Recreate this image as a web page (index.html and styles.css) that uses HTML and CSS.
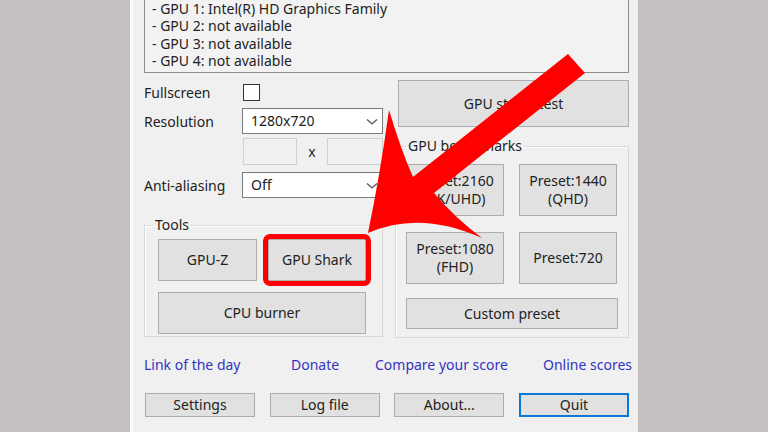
FILE: index.html
```html
<!DOCTYPE html>
<html lang="en">
<head>
    <meta charset="UTF-8">
    <title>FurMark</title>
    <link rel="stylesheet" href="styles.css">
</head>
<body>

    <div class="side"></div>

    <div class="window">
        <!-- Lista de GPUs -->
        <div class="gpu-list">
            <div>- GPU 1: Intel(R) HD Graphics Family</div>
            <div>- GPU 2: not available</div>
            <div>- GPU 3: not available</div>
            <div>- GPU 4: not available</div>
        </div>

        <div class="main">
            <div class="col-left">
                <div class="row row-full">
                    <span class="lbl">Fullscreen</span>
                    <span class="check"></span>
                </div>
                <div class="row row-res">
                    <span class="lbl">Resolution</span>
                    <div class="select">1280x720
                        <svg class="chev" width="12" height="8" viewBox="0 0 12 8"><polyline points="1,1.5 6,6 11,1.5" fill="none" stroke="#555" stroke-width="1.3"/></svg>
                    </div>
                </div>
                <div class="row row-size">
                    <span class="size-box"></span>
                    <span class="times">x</span>
                    <span class="size-box wide"></span>
                </div>
                <div class="row row-aa">
                    <span class="lbl">Anti-aliasing</span>
                    <div class="select">Off
                        <svg class="chev" width="12" height="8" viewBox="0 0 12 8"><polyline points="1,1.5 6,6 11,1.5" fill="none" stroke="#555" stroke-width="1.3"/></svg>
                    </div>
                </div>

                <fieldset class="group tools">
                    <legend>Tools</legend>
                    <div class="tools-grid">
                        <button class="btn">GPU-Z</button>
                        <button class="btn shark">GPU Shark<span class="mark"></span></button>
                        <button class="btn span2">CPU burner</button>
                    </div>
                </fieldset>
            </div>

            <div class="col-right">
                <button class="btn stress">GPU stress test</button>
                <fieldset class="group bench">
                    <legend>GPU benchmarks</legend>
                    <div class="preset-grid">
                        <button class="btn preset">Preset:2160<br>(4K/UHD)</button>
                        <button class="btn preset">Preset:1440<br>(QHD)</button>
                        <button class="btn preset">Preset:1080<br>(FHD)</button>
                        <button class="btn preset">Preset:720</button>
                    </div>
                    <button class="btn custom">Custom preset</button>
                </fieldset>
            </div>
        </div>

        <div class="links">
            <a>Link of the day</a>
            <a>Donate</a>
            <a>Compare your score</a>
            <a>Online scores</a>
        </div>

        <div class="bottom">
            <button class="btn small">Settings</button>
            <button class="btn small">Log file</button>
            <button class="btn small">About...</button>
            <button class="btn small quit">Quit</button>
        </div>
    </div>

    <div class="side"></div>

    <!-- Flecha roja encima de todo -->
    <svg class="arrow" width="768" height="432" viewBox="0 0 768 432">
        <path d="M568 54 L585 73 L434 193 Q455 218 482 238 Q420 210 368 233 Q380 175 389 110 Q401 150 413 177 Z" fill="#ff0000"/>
    </svg>

</body>
</html>
```

FILE: styles.css
```css
/* Estilos generales */
body {
    margin: 0;
    width: 768px;
    height: 432px;
    overflow: hidden;
    display: flex;
    position: relative;
    font-family: 'Noto Sans', sans-serif;
    font-size: 14px;
    color: #222;
    background-color: #c4c0c0;
}

.side {
    width: 130px;
    flex: none;
    background-color: #c4c0c0;
}

.window {
    width: 508px;
    flex: none;
    box-sizing: border-box;
    padding: 0 9px 0 11px;
    background-color: #f0f0f0;
    border-left: 3px solid #fafafa;
}

.gpu-list {
    height: 73px;
    box-sizing: border-box;
    border: 1px solid #8e8e8e;
    border-top: none;
    padding-left: 7px;
    line-height: 17.3px;
    background-color: #f2f2f2;
}

.main {
    display: flex;
    gap: 12px;
}

.col-left {
    width: 239px;
}

.col-right {
    width: 234px;
}

.row {
    display: flex;
    align-items: center;
}

.lbl {
    width: 98px;
}

.row-full {
    margin-top: 11px;
    height: 17px;
}

.check {
    width: 15px;
    height: 15px;
    margin-left: 1px;
    border: 1px solid #333;
    background-color: #fff;
}

.row-res {
    margin-top: 7px;
}

.select {
    position: relative;
    width: 141px;
    height: 26px;
    box-sizing: border-box;
    border: 1px solid #7a7a7a;
    background-color: #fff;
    padding-left: 8px;
    line-height: 24px;
}

.chev {
    position: absolute;
    right: 4px;
    top: 9px;
}

.row-size {
    margin-top: 4px;
    padding-left: 99px;
}

.size-box {
    width: 54px;
    height: 27px;
    box-sizing: border-box;
    border: 1px solid #d0d0d0;
    background-color: #f0f0f0;
}

.size-box.wide {
    width: 56px;
}

.times {
    width: 30px;
    text-align: center;
}

.row-aa {
    margin-top: 7px;
}

.group {
    margin: 0;
    border: 1px solid #d8d8d8;
    box-shadow: inset 1px 1px 0 #fff;
}

.group legend {
    padding: 0 2px;
    line-height: 18px;
}

.tools {
    margin-top: 18px;
    padding: 5px 0 2px 13px;
    height: 121px;
    box-sizing: border-box;
}

.tools legend {
    margin-left: -5px;
}

.tools-grid {
    display: grid;
    grid-template-columns: 99px 98px;
    grid-auto-rows: 42px;
    column-gap: 11px;
    row-gap: 11px;
}

.span2 {
    grid-column: span 2;
}

.btn {
    font-family: inherit;
    font-size: 14px;
    color: #222;
    background-color: #e1e1e1;
    border: 1px solid #adadad;
    padding: 0;
    margin: 0;
    line-height: 18px;
}

.shark {
    position: relative;
}

.mark {
    position: absolute;
    left: -6px;
    right: -6px;
    top: -6px;
    bottom: -6px;
    border: 5px solid #ff0000;
    border-radius: 7px;
}

.stress {
    display: block;
    margin-top: 7px;
    margin-left: 3px;
    width: 231px;
    height: 47px;
}

.bench {
    margin-top: 10px;
    padding: 9px 0 0 10px;
    height: 201px;
    box-sizing: border-box;
}

.preset-grid {
    display: grid;
    grid-template-columns: 98px 98px;
    grid-auto-rows: 52px;
    column-gap: 15px;
    row-gap: 16px;
}

.custom {
    display: block;
    margin-top: 14px;
    width: 212px;
    height: 31px;
}

.links {
    display: grid;
    grid-template-columns: 147px 84px 168px auto;
    margin-top: 17px;
    line-height: 20px;
    white-space: nowrap;
    color: #3434c0;
}

.bottom {
    display: flex;
    justify-content: space-between;
    margin-top: 18px;
    padding-left: 1px;
}

.small {
    width: 110px;
    height: 24px;
}

.quit {
    border: 2px solid #0a78d4;
}

.arrow {
    position: absolute;
    left: 0;
    top: 0;
}
```
